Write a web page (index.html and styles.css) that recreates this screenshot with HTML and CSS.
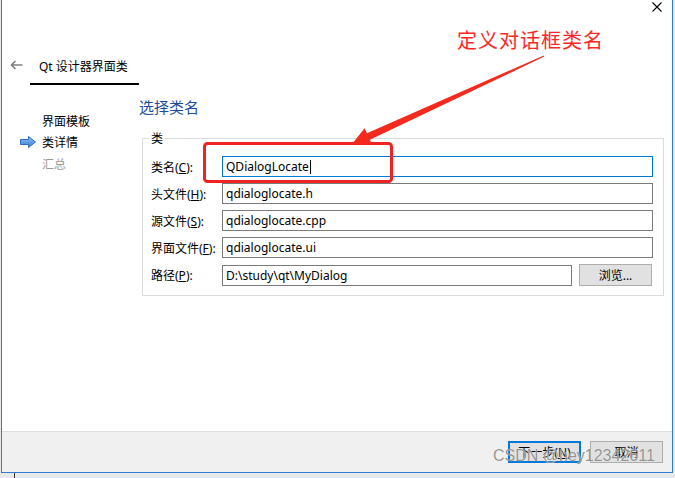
FILE: index.html
```html
<!DOCTYPE html>
<html lang="zh-CN">
<head>
    <meta charset="UTF-8">
    <title>Qt 设计器界面类</title>
    <link rel="stylesheet" href="styles.css">
</head>
<body>
    <div class="dialog">
        <svg class="close" width="10" height="10" viewBox="0 0 10 10">
            <path d="M0.5 0.5 L9.5 9.5 M9.5 0.5 L0.5 9.5" stroke="#000" stroke-width="1.1" fill="none"/>
        </svg>

        <div class="content">
            <div class="header">
                <svg class="back" width="13" height="10" viewBox="0 0 13 10">
                    <path d="M12.5 5 H1.5 M5.5 1 L1.5 5 L5.5 9" stroke="#808080" stroke-width="1.6" fill="none"/>
                </svg>
                <div class="tab">Qt 设计器界面类</div>
            </div>

            <div class="body">
                <ul class="nav">
                    <li><span class="mark"></span>界面模板</li>
                    <li>
                        <span class="mark">
                            <svg width="16" height="12" viewBox="0 0 16 12">
                                <defs>
                                    <linearGradient id="navArrow" x1="0" y1="0" x2="0" y2="1">
                                        <stop offset="0" stop-color="#8cc0f4"/>
                                        <stop offset="1" stop-color="#3a7fd6"/>
                                    </linearGradient>
                                </defs>
                                <polygon points="0.5,3.5 8.5,3.5 8.5,0.5 15.5,6 8.5,11.5 8.5,8.5 0.5,8.5" fill="url(#navArrow)" stroke="#2d6cc0" stroke-width="1"/>
                            </svg>
                        </span>类详情
                    </li>
                    <li class="muted"><span class="mark"></span>汇总</li>
                </ul>

                <div class="main">
                    <h2 class="title">选择类名</h2>
                    <div class="group">
                        <div class="group-title">类</div>
                        <div class="rows">
                            <div class="row">
                                <span class="label">类名(<u>C</u>):</span>
                                <div class="field focused">QDialogLocate<span class="caret"></span></div>
                            </div>
                            <div class="row">
                                <span class="label">头文件(<u>H</u>):</span>
                                <div class="field">qdialoglocate.h</div>
                            </div>
                            <div class="row">
                                <span class="label">源文件(<u>S</u>):</span>
                                <div class="field">qdialoglocate.cpp</div>
                            </div>
                            <div class="row">
                                <span class="label">界面文件(<u>F</u>):</span>
                                <div class="field">qdialoglocate.ui</div>
                            </div>
                            <div class="row row-path">
                                <span class="label">路径(<u>P</u>):</span>
                                <div class="field path">D:\study\qt\MyDialog</div>
                                <button class="btn browse">浏览...</button>
                            </div>
                        </div>
                    </div>
                </div>
            </div>
        </div>

        <div class="footer">
            <button class="btn primary">下一步(<u>N</u>)</button>
            <button class="btn">取消</button>
        </div>

        <!-- annotations drawn on top of the screenshot -->
        <div class="note">定义对话框类名</div>
        <svg class="marks" width="675" height="478" viewBox="0 0 675 478">
            <rect x="204.5" y="143.5" width="187" height="38" rx="3" fill="none" stroke="#f02222" stroke-width="3"/>
            <polygon points="352,144 364.6,128.3 366.9,133.3 543.8,55.4 544.3,56.6 369.9,139.7 372.2,144.7" fill="#f42a1e"/>
        </svg>
        <div class="watermark">CSDN @hey12342611</div>
    </div>
    <div class="under"></div>
</body>
</html>
```

FILE: styles.css
```css
body {
    margin: 0;
    background: #e8e8e8;
    font-family: "Noto Sans", "Noto Sans CJK SC", sans-serif;
    font-size: 12px;
    color: #000;
}

.dialog {
    position: relative;
    width: 670px;
    height: 472px;
    margin-left: 1px;
    background: #fff;
    border: 1px solid #2b7bd0;
    border-top: none;
    display: flex;
    flex-direction: column;
}

.close {
    position: absolute;
    left: 650px;
    top: 2px;
}

.content {
    flex: 1;
}

.header {
    display: flex;
    align-items: flex-start;
    padding: 55px 0 0 8px;
}

.back {
    margin: 5px 7px 0 0;
}

.tab {
    width: 109px;
    box-sizing: border-box;
    padding: 0 0 4px 9px;
    line-height: 24px;
    border-bottom: 2px solid #000;
    white-space: nowrap;
}

.body {
    display: flex;
    align-items: flex-start;
}

.nav {
    width: 137px;
    box-sizing: border-box;
    margin: 25px 0 0;
    padding: 0 0 0 18px;
    list-style: none;
}

.nav li {
    display: flex;
    align-items: center;
    height: 21.5px;
}

.nav .mark {
    display: flex;
    align-items: center;
    width: 22px;
    height: 12px;
}

.nav .muted {
    color: #9a9a9a;
}

.main {
    flex: 1;
}

.title {
    margin: 12px 0 0;
    font-size: 15px;
    font-weight: normal;
    line-height: 20px;
    color: #1a4c9e;
}

.group {
    width: 522px;
    box-sizing: border-box;
    margin: 21px 0 0 3px;
    padding: 0 9px 9px 8px;
    border: 1px solid #dcdcdc;
}

.group-title {
    width: fit-content;
    margin: -8px 0 0 -2px;
    padding: 0 2px;
    line-height: 16px;
    background: #fff;
}

.rows {
    display: flex;
    flex-direction: column;
    gap: 6px;
    margin-top: 9px;
}

.row {
    display: flex;
    align-items: center;
    height: 21px;
}

.row-path {
    height: 22px;
}

.label {
    width: 71px;
    white-space: nowrap;
}

.field {
    display: flex;
    align-items: center;
    width: 431px;
    height: 21px;
    box-sizing: border-box;
    padding-left: 3px;
    border: 1px solid #7a7a7a;
    white-space: nowrap;
}

.field.focused {
    border-color: #0078d7;
}

.field.path {
    width: 350px;
}

.caret {
    display: inline-block;
    width: 1px;
    height: 14px;
    margin-left: 1px;
    background: #000;
}

.btn {
    width: 73px;
    height: 22px;
    padding: 0;
    border: 1px solid #adadad;
    background: #e1e1e1;
    font: inherit;
    color: #000;
}

.btn.browse {
    margin-left: 7px;
}

.btn.primary {
    border: 2px solid #0078d7;
}

.footer {
    height: 41px;
    box-sizing: border-box;
    display: flex;
    justify-content: flex-end;
    gap: 9px;
    padding: 9px 9px 0 0;
    border-top: 1px solid #dfdfdf;
    background: #f0f0f0;
}

.note {
    position: absolute;
    left: 455px;
    top: 27px;
    font-size: 20px;
    line-height: 26px;
    letter-spacing: 1px;
    color: #ff2626;
    font-family: "Noto Sans CJK SC", sans-serif;
}

.marks {
    position: absolute;
    left: -2px;
    top: 0;
    pointer-events: none;
}

.watermark {
    position: absolute;
    left: 491px;
    top: 447px;
    font-family: "Liberation Sans", Arial, sans-serif;
    font-size: 16px;
    line-height: 18px;
    color: rgba(120, 120, 120, 0.8);
    text-shadow: 0 0 1px #fff;
    pointer-events: none;
}

.under {
    width: 1px;
    height: 5px;
    margin-left: 14px;
    background: #333;
}
```
